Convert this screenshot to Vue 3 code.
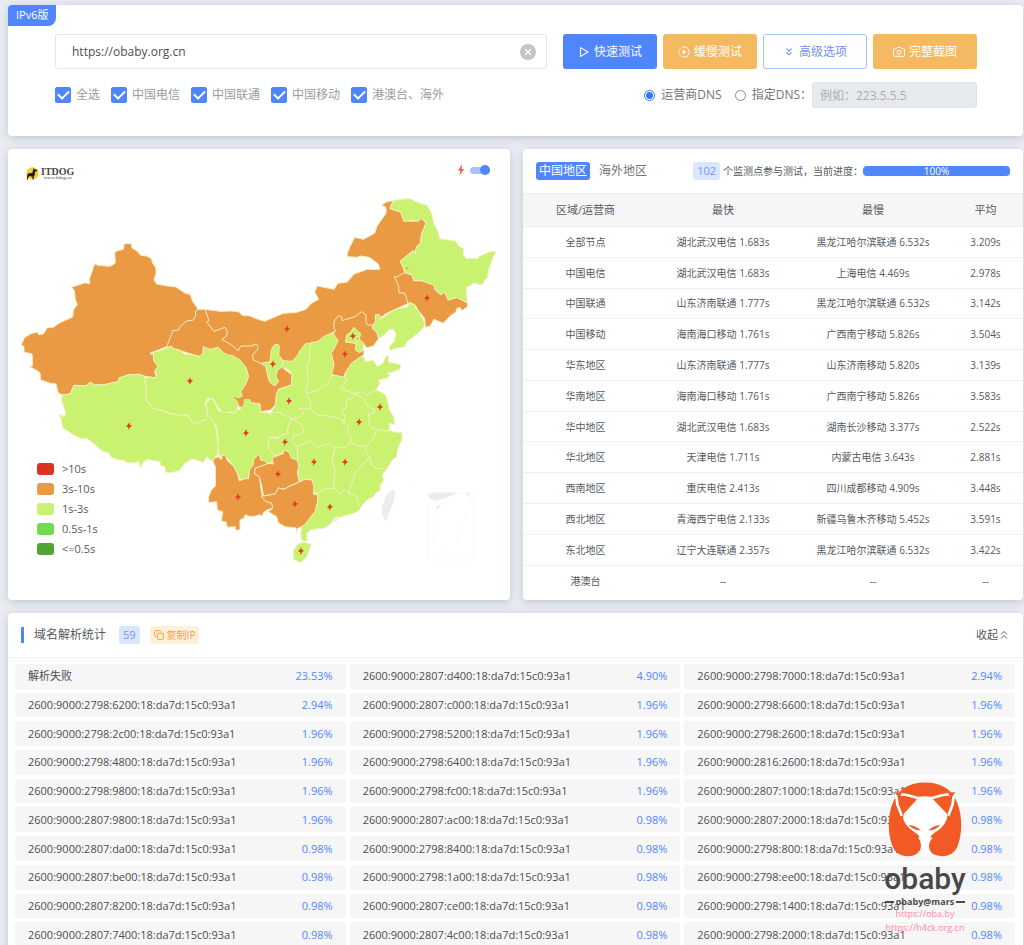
<script setup>
import { ref } from 'vue'

const url = ref('https://obaby.org.cn')
const dns = ref('isp')
const dnsServer = ref('')
const flash = ref(true)
const lines = ref([
  { id: 'all', label: '全选', on: true },
  { id: 'telecom', label: '中国电信', on: true },
  { id: 'unicom', label: '中国联通', on: true },
  { id: 'mobile', label: '中国移动', on: true },
  { id: 'overseas', label: '港澳台、海外', on: true },
])

const legend = [
  { label: '>10s', tone: 'red' },
  { label: '3s-10s', tone: 'orange' },
  { label: '1s-3s', tone: 'lime' },
  { label: '0.5s-1s', tone: 'green' },
  { label: '<=0.5s', tone: 'deep' },
]

const rows = [
  ['全部节点', '湖北武汉电信 1.683s', '黑龙江哈尔滨联通 6.532s', '3.209s'],
  ['中国电信', '湖北武汉电信 1.683s', '上海电信 4.469s', '2.978s'],
  ['中国联通', '山东济南联通 1.777s', '黑龙江哈尔滨联通 6.532s', '3.142s'],
  ['中国移动', '海南海口移动 1.761s', '广西南宁移动 5.826s', '3.504s'],
  ['华东地区', '山东济南联通 1.777s', '山东济南移动 5.820s', '3.139s'],
  ['华南地区', '海南海口移动 1.761s', '广西南宁移动 5.826s', '3.583s'],
  ['华中地区', '湖北武汉电信 1.683s', '湖南长沙移动 3.377s', '2.522s'],
  ['华北地区', '天津电信 1.711s', '内蒙古电信 3.643s', '2.881s'],
  ['西南地区', '重庆电信 2.413s', '四川成都移动 4.909s', '3.448s'],
  ['西北地区', '青海西宁电信 2.133s', '新疆乌鲁木齐移动 5.452s', '3.591s'],
  ['东北地区', '辽宁大连联通 2.357s', '黑龙江哈尔滨联通 6.532s', '3.422s'],
  ['港澳台', '--', '--', '--'],
]

const ip = (a, b) => `2600:9000:${a}:${b}:18:da7d:15c0:93a1`
const records = [
  ['解析失败', '23.53%'], [ip('2807', 'd400'), '4.90%'], [ip('2798', '7000'), '2.94%'],
  [ip('2798', '6200'), '2.94%'], [ip('2807', 'c000'), '1.96%'], [ip('2798', '6600'), '1.96%'],
  [ip('2798', '2c00'), '1.96%'], [ip('2798', '5200'), '1.96%'], [ip('2798', '2600'), '1.96%'],
  [ip('2798', '4800'), '1.96%'], [ip('2798', '6400'), '1.96%'], [ip('2816', '2600'), '1.96%'],
  [ip('2798', '9800'), '1.96%'], [ip('2798', 'fc00'), '1.96%'], [ip('2807', '1000'), '1.96%'],
  [ip('2807', '9800'), '1.96%'], [ip('2807', 'ac00'), '0.98%'], [ip('2807', '2000'), '0.98%'],
  [ip('2807', 'da00'), '0.98%'], [ip('2798', '8400'), '0.98%'], [ip('2798', '800'), '0.98%'],
  [ip('2807', 'be00'), '0.98%'], [ip('2798', '1a00'), '0.98%'], [ip('2798', 'ee00'), '0.98%'],
  [ip('2807', '8200'), '0.98%'], [ip('2807', 'ce00'), '0.98%'], [ip('2798', '1400'), '0.98%'],
  [ip('2807', '7400'), '0.98%'], [ip('2807', '4c00'), '0.98%'], [ip('2798', '2000'), '0.98%'],
]

const bolts = [
  [427, 298], [287, 329], [353, 336], [345, 354], [273, 364], [190, 381], [129, 426],
  [246, 433], [289, 401], [380, 407], [359, 422], [285, 442], [278, 474], [314, 462],
  [345, 462], [238, 497], [295, 504], [330, 507], [301, 551],
]
</script>

<template>
  <div class="page">
    <section class="card search">
      <span class="tag">IPv6版</span>
      <div class="line">
        <div class="field">
          <input v-model="url" class="url" type="text" aria-label="网址" />
          <button class="clear" type="button" aria-label="清空" @click="url = ''">
            <svg viewBox="0 0 16 16" width="16" height="16"><circle cx="8" cy="8" r="8" fill="#c3c4c6" /><path d="M5 5l6 6M11 5l-6 6" stroke="#fff" stroke-width="1.3" /></svg>
          </button>
        </div>
        <div class="actions">
          <button class="btn blue" type="button">
            <svg viewBox="0 0 12 12" width="12" height="12"><path d="M2.5 1.6v8.8L10 6z" fill="none" stroke="currentColor" stroke-width="1.1" stroke-linejoin="round" /></svg>快速测试
          </button>
          <button class="btn amber" type="button">
            <svg viewBox="0 0 12 12" width="12" height="12"><path d="M6 .8a5.2 5.2 0 0 1 0 10.4" fill="none" stroke="currentColor" /><path d="M6 .8a5.2 5.2 0 0 0 0 10.4" fill="none" stroke="currentColor" stroke-dasharray="2.4 1.2" /><path d="M4.6 3.6v4.8L8.4 6z" fill="currentColor" /></svg>缓慢测试
          </button>
          <button class="btn outline" type="button">
            <svg viewBox="0 0 12 12" width="12" height="12"><path d="M3.4 2.6L6 5l2.6-2.4M3.4 6.4L6 8.8l2.6-2.4" fill="none" stroke="currentColor" stroke-width="1.1" /></svg>高级选项
          </button>
          <button class="btn amber wide" type="button">
            <svg viewBox="0 0 12 12" width="12" height="12"><path d="M1.2 2.9h2.1l.9-1.5h3.6l.9 1.5h2.1q.7 0 .7.7v6q0 .7-.7.7H1.2q-.7 0-.7-.7v-6q0-.7.7-.7z" fill="none" stroke="currentColor" /><circle cx="6" cy="6.3" r="2" fill="none" stroke="currentColor" /></svg>完整截图
          </button>
        </div>
      </div>
      <div class="line options">
        <div class="checks">
          <label v-for="l in lines" :key="l.id"><input v-model="l.on" type="checkbox" />{{ l.label }}</label>
        </div>
        <div class="dns">
          <label><input v-model="dns" type="radio" name="dns" value="isp" />运营商DNS</label>
          <label><input v-model="dns" type="radio" name="dns" value="custom" />指定DNS：</label>
          <input v-model="dnsServer" class="server" type="text" placeholder="例如：223.5.5.5" aria-label="指定DNS" :disabled="dns === 'isp'" />
        </div>
      </div>
    </section>

    <div class="middle">
      <section class="card map">
        <header class="map-head">
          <a class="logo" href="#" aria-label="ITDOG">
            <svg viewBox="0 0 40 40" width="13" height="13"><circle cx="20" cy="20" r="19" fill="#f4cf35" /><path d="M3 38l1-14 3-4 13-2 3-14 3 3 9 2-1 4-6 1-1 10-3 5v9h-4v-8l-9-2-4 4-1 7z" fill="#1d1a16" /></svg>
            <span class="logo-text"><b>ITDOG</b><small>www.itdog.cn</small></span>
          </a>
          <label class="flash">
            <svg viewBox="0 0 8 12" width="8" height="12"><path d="M5 .5L1 6.5h2.5L2.5 11.5L7 5H4.6z" fill="#f2594b" /></svg>
            <input v-model="flash" type="checkbox" aria-label="闪电标记" />
          </label>
        </header>
        <svg class="china" viewBox="24 573 1506 1227" role="img" aria-label="中国地图">
          <g transform="translate(690 570)">
            <path class="o" d="M-96 358L-75 358-30 364 5 363 28 366 36 376 60 378 85 388 104 394 160 370 200 367 228 358 244 340 266 328 254 305 262 288 312 298 324 280 352 276 372 252 412 238 450 238 445 222 418 202 390 198 382 202 352 200 352 190 360 170 374 142 400 148 434 130 440 110 468 70 468 52 455 46 468 36 490 32 480 55 498 62 512 66 522 92 550 94 575 84 588 100 574 135 572 158 560 170 555 192 550 182 510 214 522 236 524 248 545 254 552 272 575 272 612 285 616 300 632 314 644 306 655 330 680 322 696 330 712 338 712 350 696 362 690 352 680 356 678 366 660 378 640 400 612 388 600 408 586 412 584 385 565 362 555 345 540 338 500 356 470 370 440 390 426 414 442 430 446 446 430 468 410 474 400 460 402 494 385 508 365 520 345 550 342 562 304 554 280 500 200 510 160 535 187 555 184 585 146 598 140 610 136 645 122 660 90 666 90 642 58 638 56 622 42 628 36 650 22 640 8 620 0 560-90 500-190 470-220 400Z" />
            <path class="g" d="M490 32L512 28 540 26 568 40 590 45 604 68 612 100 622 120 630 146 655 150 675 152 688 170 700 175 700 195 708 206 745 205 748 198 765 192 778 186 798 184 788 205 776 240 772 262 755 285 730 278 720 288 708 292 712 338 696 330 680 322 655 330 644 306 632 314 616 300 612 285 575 272 552 272 545 254 524 248 522 236 510 214 550 182 555 192 560 170 572 158 574 135 588 100 575 84 565 94 550 92 522 94 512 66 498 62 480 55Z" />
            <path class="ofill" d="M526 235l8-4 1 5-7 2z" />
            <path class="g" d="M540 338L555 345 556 354 565 362 578 385 584 400 582 412 565 428 545 445 530 455 525 470 500 474 480 482 478 470 492 455 498 432 492 420 478 418 462 435 446 446 442 430 426 414 436 395 436 374 448 374 452 388 470 374 500 356 532 352Z" />
          </g>
          <g transform="translate(600 990)">
            <path class="g" d="M334 38L315 42 300 62 290 80 276 94 248 92 246 108 270 124 277 135 274 165 236 178 230 190 226 225 212 250 180 246 148 218 150 300 210 400 290 400 298 456 336 450 342 492 354 495 352 520 345 545 325 570 305 590 302 610 304 628 312 634 322 632 320 612 330 600 355 596 375 594 395 578 405 562 420 562 465 548 478 540 484 530 500 510 520 500 530 486 540 482 540 465 552 450 546 440 550 430 562 415 575 392 590 380 592 360 600 340 606 330 606 308 580 306 568 300 568 278 584 285 582 262 568 240 565 220 556 195 540 185 528 180 540 160 535 150 560 145 570 135 562 130 580 125 600 118 602 104 575 98 565 98 566 76 558 80 548 100 532 110 520 92 495 94 490 75 475 85 455 100 438 125 434 142 394 134 402 105 394 70 408 45 414 32 400 12 405 4 370 20 354 34Z" />
            <path class="g" d="M16 250L20 215 36 204 46 222 56 244 72 242 84 248 100 248 108 235 120 240 124 228 134 210 148 204 152 218 178 222 182 246 210 250 234 246 274 266 262 300 265 308 240 318 232 322 208 322 204 345 206 355 230 372 222 388 206 402 185 390 172 376 160 390 160 404 148 420 146 446 124 454 112 430 100 408 76 378 66 375 64 388 54 365 54 320 48 285 30 270Z" />
            <path class="g" d="M274 266L298 278 312 295 306 310 278 320 276 335 292 350 294 390 275 385 268 368 255 360 240 374 222 375 206 355 204 345 208 322 232 326 240 318 265 308 262 300Z" />
            <path class="o" d="M54 360L56 382 64 388 66 375 78 378 82 392 100 408 112 430 118 452 136 446 146 446 148 420 160 404 160 390 172 376 180 378 182 390 198 394 200 404 165 415 164 430 178 438 182 470 186 495 192 508 216 520 218 535 200 540 190 548 188 558 178 554 160 560 146 558 136 554 132 564 120 570 120 600 106 600 106 590 82 592 78 576 64 574 68 545 52 540 50 515 26 518 26 500 34 480 46 468 46 410 38 392 40 385 52 382Z" />
            <path class="o" d="M165 415L185 408 206 400 220 402 216 384 240 374 248 372 255 360 268 368 275 385 292 390 296 410 292 428 298 456 270 468 252 478 235 474 225 492 190 498 186 470 178 440 164 432Z" />
            <path class="o" d="M190 498L225 492 235 474 252 478 270 468 298 456 315 448 336 450 342 470 340 492 354 495 352 520 345 545 325 570 318 580 305 590 292 596 290 610 288 594 255 590 235 578 230 560 205 545 218 535 216 520 196 514 184 500Z" />
            <path class="g" d="M292 644L306 636 334 642 328 660 320 680 302 698 280 688 280 662Z" />
            <path class="gray" d="M578 478L586 486 580 520 564 555 560 576 546 555 545 530 560 495Z" />
            <path class="gray" d="M398 568l8-7 9 6-6 9-8 1z" />
            <path class="gray" d="M626 460l4 1-3 3z" />
            <path class="b" d="M334 38L328 70 330 92 320 108 325 140 318 190 330 210 333 238 298 235 312 250 296 262 274 266M318 190L350 182 385 160 396 134M434 142L440 150 422 175 455 188 465 190 490 185 498 195 528 180M465 190L458 205 440 208 438 235 424 240 435 258 428 285M333 238L350 255 400 260 428 270 445 290 442 308 454 318 450 338M465 190L490 205 500 225 525 240 522 250 505 252 510 290 530 298 568 304M450 338L480 348 500 346 520 325 530 298M292 350L330 332 350 350 390 340 404 355 438 350 450 338M404 355L396 390 405 420 402 475M342 492L360 486 375 475 402 475 420 492 432 476 445 490 465 430 490 400 510 384 497 362 500 346M510 384L515 405 532 416 550 415M445 490L468 495 478 525" />
          </g>
          <g transform="translate(690 570)">
            <path class="g" d="M142 462L148 468 146 495 158 510 156 532 142 540 138 560 146 575 134 588 118 575 110 545 108 530 92 520 120 515 124 480 132 466Z" />
            <path class="g" d="M372 412L384 425 392 430 388 448 376 460 346 456 350 435 360 428Z" />
            <path class="g" d="M388 448L402 460 400 480 388 488 376 480 378 460Z" />
            <path class="ofill" d="M380 444l8 1-4 6z" />
            <path class="b" d="M524 248L498 262 492 258 505 285 507 308 525 310 535 345M318 424L312 415 312 395 325 377 335 380 336 392 375 380 395 365 408 375 408 398 415 406 430 404" />
          </g>
          <g transform="translate(30 690)">
            <path class="o" d="M34 344L44 322 66 310 82 306 86 314 100 312 112 293 130 292 148 279 188 261 190 240 202 224 196 208 193 180 184 172 226 158 240 162 238 148 254 101 264 106 298 109 312 103 316 96 314 68 322 62 340 58 343 41 364 41 366 54 380 62 392 76 410 78 424 86 428 100 438 114 438 132 432 150 440 162 460 166 498 171 526 190 540 193 548 214 564 238 556 244 557 258 548 271 530 273 510 290 506 300 488 302 480 325 470 350 420 370 432 375 430 390 444 410 434 425 440 444 410 440 386 433 356 434 328 444 325 455 300 460 284 464 254 465 240 456 228 468 192 466 180 492 158 495 144 488 138 462 122 460 92 450 90 428 68 414 58 411 68 406 66 372 42 366 42 350Z" />
            <path class="g" d="M158 495L180 492 192 466 228 468 240 456 254 465 284 464 300 460 325 455 328 444 356 434 386 433 402 440 410 450 404 460 410 470 407 510 415 520 430 535 450 540 480 550 510 555 535 555 545 575 560 580 575 570 588 572 590 550 608 570 620 600 624 650 622 672 608 695 590 680 580 697 548 686 525 700 508 722 488 727 468 728 464 710 452 706 450 694 430 692 414 688 398 698 392 716 386 694 370 698 350 698 340 690 326 690 304 682 296 668 278 664 260 648 230 624 213 626 186 612 170 600 158 595 154 570 148 555 152 552 156 560 166 556 166 545 154 510Z" />
            <path class="g" d="M420 370L450 362 485 348 490 356 510 360 522 372 548 374 565 380 578 372 580 350 600 358 625 352 640 368 652 374 670 378 690 390 708 412 716 440 706 465 692 485 697 496 690 505 668 500 682 512 690 532 682 530 676 550 660 545 642 548 622 530 610 506 594 504 586 520 592 540 588 572 575 570 570 578 560 580 545 575 535 555 510 555 480 550 450 540 430 535 407 510 410 470 404 460 410 440 438 444 440 428 434 425 444 410 430 390 432 375Z" />
            <path class="ofill" d="M668 500L688 505 698 500 706 486 724 490 724 508 704 508 698 528 690 532 682 512Z" />
            <path class="b" d="M585 238L597 272 590 276 612 304 645 292 652 305 650 318 636 328 665 345 685 362 692 348 720 348 740 342 745 355 728 375 730 390 752 400" />
          </g>
          <g class="sea">
            <rect x="1283" y="1480" width="138" height="200" />
            <path d="M1284 1484l14-6h72l-28 14-34 10-14-4zM1398 1478h12l-2 12zM1310 1520l10-8-2 12-8 4zM1397 1540v14M1390 1580l-6 12M1378 1618l-10 12M1308 1555l3 12M1316 1592l-4 8M1298 1620l3 10M1335 1655l10 1M1420 1486l-16 22" />
          </g>
          <g class="bolts">
            <path v-for="b in bolts" :key="b.join()" d="M2-11L-9 2-2 3-3 11 9-2 2-3z" :transform="`translate(${b[0] * 3} ${b[1] * 3})`" />
          </g>
        </svg>
        <ul class="legend">
          <li v-for="l in legend" :key="l.label"><i :class="l.tone"></i>{{ l.label }}</li>
        </ul>
      </section>

      <section class="card stats">
        <header class="stats-head">
          <nav class="tabs">
            <button class="tab active" type="button">中国地区</button>
            <button class="tab" type="button">海外地区</button>
          </nav>
          <div class="progress">
            <span class="badge">102</span>
            <span class="hint">个监测点参与测试，当前进度：</span>
            <div class="bar" role="progressbar" aria-valuenow="100" aria-label="当前进度">100%</div>
          </div>
        </header>
        <table>
          <thead>
            <tr><th>区域/运营商</th><th>最快</th><th>最慢</th><th>平均</th></tr>
          </thead>
          <tbody>
            <tr v-for="r in rows" :key="r[0]"><td v-for="(c, i) in r" :key="i">{{ c }}</td></tr>
          </tbody>
        </table>
      </section>
    </div>

    <section class="card resolve">
      <header class="resolve-head">
        <h2>域名解析统计</h2>
        <span class="badge">59</span>
        <button class="copy" type="button">
          <svg viewBox="0 0 10 10" width="10" height="10"><path d="M2.6 6.4H1.3q-.7 0-.7-.7V1.3q0-.7.7-.7h4.4q.7 0 .7.7v1.2M4.2 3.3h4.5q.7 0 .7.7v4.6q0 .7-.7.7H4.2q-.7 0-.7-.7V4q0-.7.7-.7z" fill="none" stroke="currentColor" /></svg>复制IP
        </button>
        <button class="fold" type="button">收起<svg viewBox="0 0 8 10" width="8" height="10"><path d="M1 4.5l3-3 3 3M1 8.5l3-3 3 3" fill="none" stroke="currentColor" /></svg></button>
      </header>
      <ul class="records">
        <li v-for="r in records" :key="r[0]"><span>{{ r[0] }}</span><b>{{ r[1] }}</b></li>
      </ul>
    </section>

    <aside class="mark">
      <svg viewBox="0 0 222 224" width="74" height="75">
        <path d="M111 1C160 1 188 22 202 50C224 92 224 150 210 188C202 212 186 222 162 222C136 222 122 208 123 190Q124 178 134 166H90Q100 178 99 190C98 210 84 222 60 222C36 222 20 212 12 188C-2 150-2 92 20 50C34 22 62 1 111 1Z" fill="#f15a24" />
        <path d="M24 32L28 66 40 98M24 34Q62 38 92 48Q111 44 130 48Q160 38 198 34M198 32L194 66 182 98" fill="none" stroke="#fff" stroke-width="8" stroke-linejoin="round" stroke-linecap="round" />
        <path d="M20 30H42L34 50 30 44ZM202 30H180L188 50 192 44ZM32 42L42 88 90 54ZM190 42L180 88 132 54Z" fill="#f15a24" />
        <path d="M92 46Q111 42 130 46L176 94Q180 100 176 112C164 140 146 146 132 158Q124 166 123 190L124 224H98L99 190Q98 166 90 158C74 146 56 136 46 112Q44 100 48 94Z" fill="#fff" />
        <path d="M62 128Q84 132 98 144Q76 146 62 128ZM156 128Q134 132 122 144Q144 146 156 128Z" fill="#f15a24" />
      </svg>
      <strong>obaby</strong>
      <span class="handle">obaby@mars</span>
      <a href="https://oba.by">https://oba.by</a>
      <a href="https://h4ck.org.cn">https://h4ck.org.cn</a>
    </aside>
  </div>
</template>

<style>
body {
  margin: 0;
  background: #e9ecf2;
}
</style>

<style scoped>
* {
  box-sizing: border-box;
}
.page {
  position: relative;
  height: 100vh;
  overflow: hidden;
  padding: 5px 1px 0 8px;
  display: flex;
  flex-direction: column;
  gap: 13px;
  color: #555a60;
  font: 12px/16px "Open Sans", "Noto Sans CJK SC", sans-serif;
}
.card {
  flex: none;
  background: #fff;
  border-radius: 4px;
  box-shadow: 0 2px 8px rgba(90, 100, 120, 0.28);
}
button {
  font: inherit;
  border: 0;
  padding: 0;
  background: none;
  color: inherit;
  cursor: pointer;
}
ul {
  list-style: none;
  margin: 0;
  padding: 0;
}
.search {
  position: relative;
  padding: 29px 46px 28px 47px;
}
.tag {
  position: absolute;
  top: 0;
  left: 0;
  padding: 2px 8px 3px;
  font-size: 11px;
  color: #fff;
  background: #5086fb;
  border-radius: 4px 0 8px 0;
}
.line {
  display: flex;
  gap: 16px;
}
.field {
  position: relative;
  flex: 1;
}
.url {
  width: 100%;
  height: 35px;
  padding: 0 40px 0 16px;
  font: inherit;
  color: #4b4f55;
  border: 1px solid #e3e5ea;
  border-radius: 3px;
  outline: 0;
}
.clear {
  position: absolute;
  top: 10px;
  right: 11px;
  height: 16px;
  line-height: 0;
}
.actions {
  display: flex;
  gap: 6px;
}
.btn {
  width: 94px;
  height: 35px;
  display: flex;
  align-items: center;
  justify-content: center;
  gap: 4px;
  color: #fff;
  border-radius: 3px;
}
.blue {
  background: #5086fb;
}
.amber {
  background: #f5b961;
}
.wide,
.outline {
  width: 104px;
}
.outline {
  color: #6f93f0;
  border: 1px solid #a4bffc;
}
.options {
  margin-top: 13px;
  justify-content: space-between;
}
.checks,
.dns,
.checks label,
.dns label {
  display: flex;
  align-items: center;
}
.checks {
  gap: 11px;
  color: #9a9c9f;
}
.checks label {
  gap: 5px;
}
.checks input {
  appearance: none;
  width: 16px;
  height: 16px;
  margin: 0;
  background: #fff;
  border: 1px solid #5086fb;
  border-radius: 2px;
  display: grid;
  place-items: center;
}
.checks input:checked {
  background: #5086fb;
}
.checks input:checked::after {
  content: "";
  width: 9px;
  height: 5px;
  margin-bottom: 3px;
  border: solid #fff;
  border-width: 0 0 2px 2px;
  transform: rotate(-45deg);
}
.dns {
  color: #72767b;
}
.dns label {
  gap: 6px;
  margin-right: 13px;
}
.dns label:nth-of-type(2) {
  margin-right: 0;
}
.dns label input {
  appearance: none;
  width: 11px;
  height: 11px;
  margin: 0;
  border: 1px solid #85888c;
  border-radius: 50%;
}
.dns label input:checked {
  border-color: #2f7bf6;
  background: radial-gradient(#2f7bf6 0 3px, #fff 4px);
}
.server {
  width: 165px;
  height: 26px;
  padding: 0 7px;
  font: inherit;
  border: 1px solid #dfe2e6;
  border-radius: 3px;
  background: #e7eaed;
}
.server::placeholder {
  color: #a9adb2;
}
.middle {
  display: grid;
  grid-template-columns: 502fr 500fr;
  gap: 13px;
}
.map {
  position: relative;
}
.map-head {
  height: 42px;
  padding: 15px 20px 0 18px;
  display: flex;
  justify-content: space-between;
  align-items: flex-start;
}
.logo {
  display: flex;
  gap: 2px;
  padding-top: 3px;
  color: #4a4545;
  text-decoration: none;
}
.logo-text {
  display: flex;
  flex-direction: column;
  font-family: "Liberation Serif", serif;
}
.logo-text b {
  font-size: 10px;
  line-height: 9px;
}
.logo-text small {
  font-size: 5px;
  line-height: 4px;
  text-align: center;
}
.flash {
  display: flex;
  align-items: center;
  gap: 5px;
}
.flash input {
  appearance: none;
  width: 20px;
  height: 7px;
  margin: 0;
  border-radius: 4px;
  background: #a9c2fd;
  display: flex;
  align-items: center;
}
.flash input:checked {
  justify-content: flex-end;
}
.flash input::after {
  content: "";
  width: 10px;
  height: 10px;
  flex: none;
  border-radius: 50%;
  background: #5086fb;
}
.china {
  display: block;
  width: 100%;
}
.o,
.g,
.b {
  stroke: #f6efc4;
  stroke-width: 3;
  stroke-linejoin: round;
}
.o,
.ofill {
  fill: #ea9a43;
}
.g {
  fill: #c8f26f;
}
.b {
  fill: none;
}
.gray {
  fill: #ededed;
}
.sea {
  fill: #ececec;
  stroke: #f2f2f2;
  stroke-width: 3;
}
.sea rect {
  fill: none;
  stroke: #f9f9f9;
}
.bolts {
  fill: #e23c22;
}
.legend {
  position: absolute;
  left: 29px;
  bottom: 43px;
  display: grid;
  gap: 4px;
  font-size: 11px;
}
.legend li {
  display: flex;
  align-items: center;
  gap: 8px;
}
.legend i {
  width: 17px;
  height: 12px;
  border-radius: 3px;
}
.red {
  background: #d8341f;
}
.orange {
  background: #ea9a43;
}
.lime {
  background: #c8f26f;
}
.green {
  background: #73d94f;
}
.deep {
  background: #52a532;
}
.stats-head {
  height: 44px;
  padding: 0 13px;
  display: flex;
  align-items: center;
  justify-content: space-between;
}
.tabs,
.progress {
  display: flex;
  align-items: center;
}
.tabs {
  gap: 6px;
}
.tab {
  padding: 1px 3px;
  border-radius: 3px;
  color: #72767b;
}
.active {
  color: #fff;
  background: #5086fb;
}
.progress {
  flex: none;
  font-size: 10px;
}
.hint {
  margin-left: 3px;
}
.badge {
  padding: 1px 4px;
  font-size: 11px;
  color: #7399f8;
  background: #dae5fe;
  border-radius: 3px;
}
.bar {
  width: 147px;
  height: 10px;
  line-height: 10px;
  text-align: center;
  color: #fff;
  background: #5086fb;
  border-radius: 4px;
}
table {
  width: 100%;
  height: 403px;
  table-layout: fixed;
  border-collapse: collapse;
  text-align: center;
}
th,
td {
  padding: 0;
  height: 30px;
  font-size: 10px;
  line-height: 14px;
  border-top: 1px solid #edf0f4;
}
th {
  height: 33px;
  font-size: 11px;
  font-weight: 400;
  background: #f6f6f7;
}
th:nth-child(1) {
  width: 25%;
}
th:nth-child(2),
th:nth-child(3) {
  width: 30%;
}
.resolve-head {
  height: 45px;
  padding: 0 15px 0 13px;
  display: flex;
  align-items: center;
  border-bottom: 1px solid #eff0f2;
}
h2 {
  margin: 0 13px 0 0;
  padding-left: 10px;
  font-size: 12px;
  font-weight: 400;
  border-left: 3px solid #5086fb;
}
.copy {
  margin-left: 10px;
  padding: 1px 4px;
  display: flex;
  align-items: center;
  gap: 3px;
  font-size: 10px;
  color: #f3a444;
  background: #fdefdc;
  border-radius: 3px;
}
.fold {
  margin-left: auto;
  display: flex;
  align-items: center;
  gap: 2px;
  font-size: 11px;
}
.records {
  min-height: 296px;
  padding: 6px 8px 7px 7px;
  display: grid;
  grid-template-columns: repeat(3, 1fr);
  gap: 4px;
}
.records li {
  padding: 0 13px;
  display: flex;
  align-items: center;
  justify-content: space-between;
  font-size: 11px;
  color: #4b4e52;
  background: #f6f6f7;
  border-radius: 3px;
}
.records b {
  font-weight: 400;
  color: #5086fb;
}
.mark {
  position: absolute;
  top: 782px;
  right: 56px;
  width: 86px;
  display: flex;
  flex-direction: column;
  align-items: center;
  font-size: 9px;
  line-height: 14px;
}
.mark strong {
  padding-top: 4px;
  font: 500 30px/35px Roboto, sans-serif;
  color: #484848;
}
.handle {
  display: flex;
  align-items: center;
  gap: 2px;
  font-weight: 700;
  line-height: 11px;
  color: #4c4c4c;
}
.handle::before,
.handle::after {
  content: "";
  width: 9px;
  height: 2px;
  background: #4c4c4c;
}
.mark a {
  color: #fb8d9f;
  text-decoration: none;
}
</style>
